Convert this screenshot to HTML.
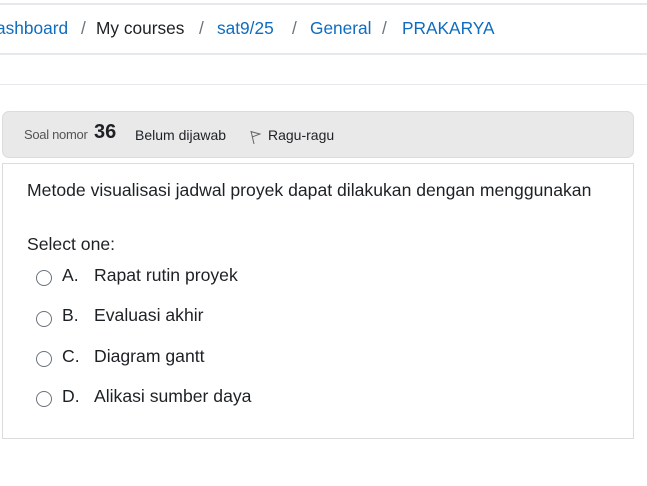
<!DOCTYPE html>
<html><head><meta charset="utf-8"><style>
body{margin:0;width:647px;height:486px;background:#fff;font-family:"Liberation Sans",Arial,sans-serif;position:relative;overflow:hidden;color:#1d2125}
.a{position:absolute;white-space:nowrap}
.hl{position:absolute;left:0;right:0;height:2px;background:#e6e9ec}
.bc{top:18px;font-size:17.3px}
.bl{color:#0f6cbf}
.sep{color:#6a737b}
.q{font-size:17.6px}
.r{position:absolute;left:36px;width:16px;height:16px;border:1.3px solid #6a737b;border-radius:50%;box-sizing:border-box}
</style></head><body>
<div class="hl" style="top:3px"></div>
<div class="a bc bl" style="left:-4px">ashboard</div>
<div class="a bc sep" style="left:81px">/</div>
<div class="a bc" style="left:96px">My courses</div>
<div class="a bc sep" style="left:199px">/</div>
<div class="a bc bl" style="left:217px">sat9/25</div>
<div class="a bc sep" style="left:292px">/</div>
<div class="a bc bl" style="left:310px">General</div>
<div class="a bc sep" style="left:382px">/</div>
<div class="a bc bl" style="left:402px">PRAKARYA</div>
<div class="hl" style="top:53px"></div>
<div class="hl" style="top:84px;height:1px"></div>
<div class="a" style="left:2px;top:111px;width:632px;height:47px;background:#e9e9e9;border:1px solid #dcdcdc;border-radius:7px;box-sizing:border-box"></div>
<div class="a" style="left:24px;top:127px;font-size:13px;color:#555;letter-spacing:-0.3px">Soal nomor</div>
<div class="a" style="left:94px;top:121px;font-size:20px;font-weight:bold;color:#1d2125">36</div>
<div class="a" style="left:135px;top:127px;font-size:14px">Belum dijawab</div>
<svg class="a" style="left:249px;top:130px" width="12" height="16" viewBox="0 0 12 16"><path d="M2 1 L5 14 M1.5 1.5 L11 4 L3 7" fill="none" stroke="#666" stroke-width="1"/></svg>
<div class="a" style="left:268px;top:127px;font-size:14px">Ragu-ragu</div>
<div class="a" style="left:2px;top:163px;width:632px;height:276px;border:1px solid #dcdcdc;box-sizing:border-box"></div>
<div class="a q" style="left:27px;top:180px">Metode visualisasi jadwal proyek dapat dilakukan dengan menggunakan</div>
<div class="a q" style="left:27px;top:234px">Select one:</div>
<div class="r" style="top:270px"></div><div class="a q" style="left:62px;top:265px">A.</div><div class="a q" style="left:94px;top:265px">Rapat rutin proyek</div>
<div class="r" style="top:311px"></div><div class="a q" style="left:62px;top:305px">B.</div><div class="a q" style="left:94px;top:305px">Evaluasi akhir</div>
<div class="r" style="top:351px"></div><div class="a q" style="left:62px;top:346px">C.</div><div class="a q" style="left:94px;top:346px">Diagram gantt</div>
<div class="r" style="top:391px"></div><div class="a q" style="left:62px;top:386px">D.</div><div class="a q" style="left:94px;top:386px">Alikasi sumber daya</div>
</body></html>
